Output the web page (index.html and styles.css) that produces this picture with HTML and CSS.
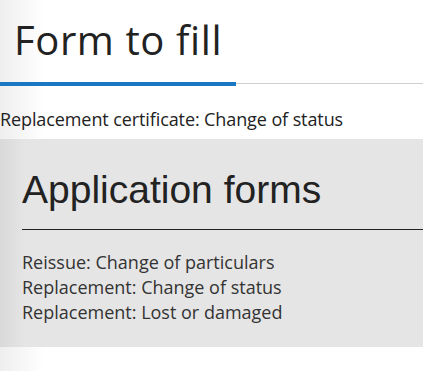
FILE: index.html
```html
<!DOCTYPE html>
<html>
  <head>
    <title>Form to fill</title>
    <link rel="stylesheet" href="styles.css">
  </head>
  <body>
    <div id="page">
      <div class="tabbar">
        <div class="tab"><h1>Form to fill</h1></div>
        <div class="rest"></div>
      </div>
      <p class="crumb">Replacement certificate: Change of status</p>
      <div class="forms">
        <h2>Application forms</h2>
        <ul>
          <li>Reissue: Change of particulars</li>
          <li>Replacement: Change of status</li>
          <li>Replacement: Lost or damaged</li>
        </ul>
      </div>
    </div>
  </body>
</html>
```

FILE: styles.css
```css
body {margin: 0; font-family: "Open Sans", sans-serif; color: #222;}
#page {height: 100vh; background: linear-gradient(to right, #eeeeee, #ffffff 45px);}
.tabbar {display: flex; padding-top: 6px;}
.tab {width: 236px; border-bottom: 4px solid #1a78c2;}
.tab h1 {margin: 0; padding: 0 0 8px 14px; font-size: 40px; letter-spacing: 0.6px; font-weight: normal; line-height: 68px;}
.rest {flex: 1; border-bottom: 1px solid #cfcfcf; margin-bottom: 2px;}
.crumb {margin: 0; padding: 21px 0 7px; font-size: 18px; line-height: 25px; letter-spacing: -0.1px;}
.forms {background: linear-gradient(to right, #d9d9d9, #e5e5e5 25px); padding: 28px 0 22px 22px;}
.forms h2 {margin: 0; font-family: "Liberation Sans", Arial, sans-serif; font-weight: normal; font-size: 39px; line-height: 45px; border-bottom: 1px solid #222; padding-bottom: 17px;}
.forms ul {list-style: none; margin: 0; padding: 20px 0 0;}
.forms li {font-size: 18px; line-height: 25px; color: #333;}
```
